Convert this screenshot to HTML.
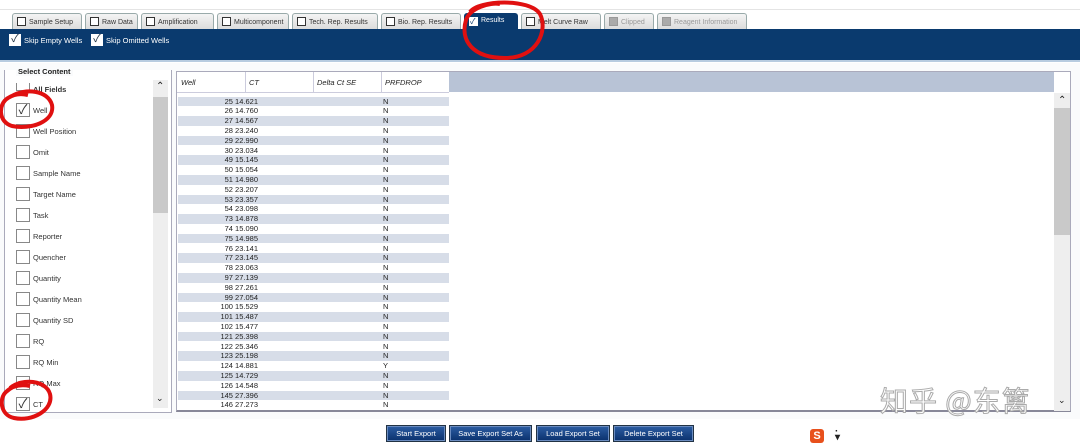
<!DOCTYPE html>
<html><head><meta charset="utf-8"><style>
*{box-sizing:border-box;margin:0;padding:0}
body{width:1080px;height:447px;background:#fff;position:relative;overflow:hidden;font-family:"Liberation Sans","Noto Sans CJK SC",sans-serif;font-size:8px;color:#222}
.a{position:absolute}
.tab{position:absolute;top:13px;height:16px;background:linear-gradient(#f4f4f4,#dcdcdc);border:1px solid #9aa;border-bottom:none;border-radius:3px 3px 0 0;font-size:7px;padding:3px 0 0 4px;white-space:nowrap;color:#333}
.tab i{display:inline-block;width:9px;height:9px;border:1px solid #333;background:#fff;vertical-align:-2px;margin-right:3px}
.tab.g i{background:#aaa;border-color:#999}
.tab.g{color:#999}
.cb{position:absolute;left:16px;width:14px;height:14px;border:1px solid #888;background:#fff}
.lbl{position:absolute;left:33px;font-size:7.5px;color:#333}
.row{position:absolute;left:178px;width:271px;height:9.8px;font-size:7.5px;line-height:9.8px}
.btn{position:absolute;top:426px;height:15px;background:linear-gradient(#2a5aa0,#0c3370);border:1px solid #6a8bbf;outline:1px solid #234;color:#fff;font-size:7.5px;line-height:13px;text-align:center}
</style></head><body>
<div class="a" style="left:0;top:0;width:1080px;height:10px;border-bottom:1px solid #e4e4e4"></div>
<div class="tab" style="left:12px;width:70px"><i></i>Sample Setup</div>
<div class="tab" style="left:85px;width:53px"><i></i>Raw Data</div>
<div class="tab" style="left:141px;width:73px"><i></i>Amplification</div>
<div class="tab" style="left:217px;width:72px"><i></i>Multicomponent</div>
<div class="tab" style="left:292px;width:86px"><i></i>Tech. Rep. Results</div>
<div class="tab" style="left:381px;width:80px"><i></i>Bio. Rep. Results</div>
<div class="tab" style="left:464px;width:54px;background:#0a3a6e;color:#fff;border-color:#0a3a6e"><i style="background:#fff;border-color:#fff;color:#0a3a6e;font-style:normal;font-size:8px;line-height:7px">✓</i>Results</div>
<div class="tab" style="left:521px;width:80px"><i></i>Melt Curve Raw</div>
<div class="tab g" style="left:604px;width:50px"><i></i>Clipped</div>
<div class="tab g" style="left:657px;width:90px"><i></i>Reagent Information</div>
<div class="a" style="left:0;top:29px;width:1080px;height:33px;background:#0a3a6e;border-bottom:2px solid #b8cce0"></div>
<div class="a" style="left:9px;top:34px;width:12px;height:12px;background:#fff;color:#234;font-size:11px;line-height:11px;text-align:center">✓</div>
<div class="a" style="left:24px;top:36px;color:#fff;font-size:7.5px">Skip Empty Wells</div>
<div class="a" style="left:91px;top:34px;width:12px;height:12px;background:#fff;color:#234;font-size:11px;line-height:11px;text-align:center">✓</div>
<div class="a" style="left:106px;top:36px;color:#fff;font-size:7.5px">Skip Omitted Wells</div>
<div class="a" style="left:0;top:63px;width:1080px;height:356px;background:#fafbfc"></div>
<div class="a" style="left:4px;top:70px;width:168px;height:343px;border:1px solid #aab;border-top:none;background:#fff"></div>
<div class="a" style="left:16px;top:67px;font-size:7.5px;font-weight:bold;background:#fafbfc;padding:0 2px">Select Content</div>
<div class="a" style="left:153px;top:80px;width:15px;height:328px;background:#eee"></div>
<div class="a" style="left:153px;top:97px;width:15px;height:116px;background:#c9c9c9"></div>
<div class="a" style="left:156px;top:81px;font-size:10px">⌃</div>
<div class="a" style="left:156px;top:393px;font-size:9px">⌄</div>
<div class="cb" style="top:83px;height:8px;border-top:none"></div>
<div class="lbl" style="top:85px;font-weight:bold">All Fields</div>
<div class="cb" style="top:103px;font-size:13px;line-height:12px;text-align:center;color:#333">✓</div><div class="lbl" style="top:106px">Well</div>
<div class="cb" style="top:124px"></div><div class="lbl" style="top:127px">Well Position</div>
<div class="cb" style="top:145px"></div><div class="lbl" style="top:148px">Omit</div>
<div class="cb" style="top:166px"></div><div class="lbl" style="top:169px">Sample Name</div>
<div class="cb" style="top:187px"></div><div class="lbl" style="top:190px">Target Name</div>
<div class="cb" style="top:208px"></div><div class="lbl" style="top:211px">Task</div>
<div class="cb" style="top:229px"></div><div class="lbl" style="top:232px">Reporter</div>
<div class="cb" style="top:250px"></div><div class="lbl" style="top:253px">Quencher</div>
<div class="cb" style="top:271px"></div><div class="lbl" style="top:274px">Quantity</div>
<div class="cb" style="top:292px"></div><div class="lbl" style="top:295px">Quantity Mean</div>
<div class="cb" style="top:313px"></div><div class="lbl" style="top:316px">Quantity SD</div>
<div class="cb" style="top:334px"></div><div class="lbl" style="top:337px">RQ</div>
<div class="cb" style="top:355px"></div><div class="lbl" style="top:358px">RQ Min</div>
<div class="cb" style="top:376px"></div><div class="lbl" style="top:379px">RQ Max</div>
<div class="cb" style="top:397px;font-size:13px;line-height:12px;text-align:center;color:#333">✓</div><div class="lbl" style="top:400px">CT</div>
<div class="a" style="left:176px;top:71px;width:895px;height:341px;border:1px solid #aab;border-bottom:2px solid #889;background:#fff"></div>
<div class="a" style="left:177px;top:72px;width:877px;height:20px;background:#b8c3d6"></div>
<div class="a" style="left:177px;top:72px;width:272px;height:21px;background:#fff;border-bottom:1px solid #ccd;font-style:italic;font-size:7.5px">
<span class="a" style="left:4px;top:6px">Well</span><span class="a" style="left:68px;top:0;height:21px;border-left:1px solid #ccd"></span>
<span class="a" style="left:72px;top:6px">CT</span><span class="a" style="left:136px;top:0;height:21px;border-left:1px solid #ccd"></span>
<span class="a" style="left:140px;top:6px">Delta Ct SE</span><span class="a" style="left:204px;top:0;height:21px;border-left:1px solid #ccd"></span>
<span class="a" style="left:208px;top:6px">PRFDROP</span></div>
<div class="a" style="left:1054px;top:93px;width:16px;height:318px;background:#eee"></div>
<div class="a" style="left:1054px;top:108px;width:16px;height:127px;background:#c9c9c9"></div>
<div class="a" style="left:1058px;top:95px;font-size:10px">⌃</div>
<div class="a" style="left:0;top:96.5px;width:0;height:0">
<div style="position:relative">
<div class="row" style="top:0;background:#d7dde8"><span class="a" style="width:80px;text-align:right">25 14.621</span><span class="a" style="left:205px">N</span></div>
<div class="row" style="top:9.8px;background:#fff"><span class="a" style="width:80px;text-align:right">26 14.760</span><span class="a" style="left:205px">N</span></div>
<div class="row" style="top:19.6px;background:#d7dde8"><span class="a" style="width:80px;text-align:right">27 14.567</span><span class="a" style="left:205px">N</span></div>
<div class="row" style="top:29.4px;background:#fff"><span class="a" style="width:80px;text-align:right">28 23.240</span><span class="a" style="left:205px">N</span></div>
<div class="row" style="top:39.2px;background:#d7dde8"><span class="a" style="width:80px;text-align:right">29 22.990</span><span class="a" style="left:205px">N</span></div>
<div class="row" style="top:49px;background:#fff"><span class="a" style="width:80px;text-align:right">30 23.034</span><span class="a" style="left:205px">N</span></div>
<div class="row" style="top:58.8px;background:#d7dde8"><span class="a" style="width:80px;text-align:right">49 15.145</span><span class="a" style="left:205px">N</span></div>
<div class="row" style="top:68.6px;background:#fff"><span class="a" style="width:80px;text-align:right">50 15.054</span><span class="a" style="left:205px">N</span></div>
<div class="row" style="top:78.4px;background:#d7dde8"><span class="a" style="width:80px;text-align:right">51 14.980</span><span class="a" style="left:205px">N</span></div>
<div class="row" style="top:88.2px;background:#fff"><span class="a" style="width:80px;text-align:right">52 23.207</span><span class="a" style="left:205px">N</span></div>
<div class="row" style="top:98px;background:#d7dde8"><span class="a" style="width:80px;text-align:right">53 23.357</span><span class="a" style="left:205px">N</span></div>
<div class="row" style="top:107.8px;background:#fff"><span class="a" style="width:80px;text-align:right">54 23.098</span><span class="a" style="left:205px">N</span></div>
<div class="row" style="top:117.6px;background:#d7dde8"><span class="a" style="width:80px;text-align:right">73 14.878</span><span class="a" style="left:205px">N</span></div>
<div class="row" style="top:127.4px;background:#fff"><span class="a" style="width:80px;text-align:right">74 15.090</span><span class="a" style="left:205px">N</span></div>
<div class="row" style="top:137.2px;background:#d7dde8"><span class="a" style="width:80px;text-align:right">75 14.985</span><span class="a" style="left:205px">N</span></div>
<div class="row" style="top:147px;background:#fff"><span class="a" style="width:80px;text-align:right">76 23.141</span><span class="a" style="left:205px">N</span></div>
<div class="row" style="top:156.8px;background:#d7dde8"><span class="a" style="width:80px;text-align:right">77 23.145</span><span class="a" style="left:205px">N</span></div>
<div class="row" style="top:166.6px;background:#fff"><span class="a" style="width:80px;text-align:right">78 23.063</span><span class="a" style="left:205px">N</span></div>
<div class="row" style="top:176.4px;background:#d7dde8"><span class="a" style="width:80px;text-align:right">97 27.139</span><span class="a" style="left:205px">N</span></div>
<div class="row" style="top:186.2px;background:#fff"><span class="a" style="width:80px;text-align:right">98 27.261</span><span class="a" style="left:205px">N</span></div>
<div class="row" style="top:196px;background:#d7dde8"><span class="a" style="width:80px;text-align:right">99 27.054</span><span class="a" style="left:205px">N</span></div>
<div class="row" style="top:205.8px;background:#fff"><span class="a" style="width:80px;text-align:right">100 15.529</span><span class="a" style="left:205px">N</span></div>
<div class="row" style="top:215.6px;background:#d7dde8"><span class="a" style="width:80px;text-align:right">101 15.487</span><span class="a" style="left:205px">N</span></div>
<div class="row" style="top:225.4px;background:#fff"><span class="a" style="width:80px;text-align:right">102 15.477</span><span class="a" style="left:205px">N</span></div>
<div class="row" style="top:235.2px;background:#d7dde8"><span class="a" style="width:80px;text-align:right">121 25.398</span><span class="a" style="left:205px">N</span></div>
<div class="row" style="top:245px;background:#fff"><span class="a" style="width:80px;text-align:right">122 25.346</span><span class="a" style="left:205px">N</span></div>
<div class="row" style="top:254.8px;background:#d7dde8"><span class="a" style="width:80px;text-align:right">123 25.198</span><span class="a" style="left:205px">N</span></div>
<div class="row" style="top:264.6px;background:#fff"><span class="a" style="width:80px;text-align:right">124 14.881</span><span class="a" style="left:205px">Y</span></div>
<div class="row" style="top:274.4px;background:#d7dde8"><span class="a" style="width:80px;text-align:right">125 14.729</span><span class="a" style="left:205px">N</span></div>
<div class="row" style="top:284.2px;background:#fff"><span class="a" style="width:80px;text-align:right">126 14.548</span><span class="a" style="left:205px">N</span></div>
<div class="row" style="top:294px;background:#d7dde8"><span class="a" style="width:80px;text-align:right">145 27.396</span><span class="a" style="left:205px">N</span></div>
<div class="row" style="top:303.8px;background:#fff"><span class="a" style="width:80px;text-align:right">146 27.273</span><span class="a" style="left:205px">N</span></div>
</div></div>
<div class="a" style="left:880px;top:380px;font-size:28px;color:#fff;-webkit-text-stroke:1px #aaa;letter-spacing:1px;font-family:'Noto Sans CJK SC',sans-serif">知乎 @东篱</div>
<div class="a" style="left:1058px;top:395px;font-size:9px">⌄</div>
<div class="btn" style="left:387px;width:58px">Start Export</div>
<div class="btn" style="left:450px;width:81px">Save Export Set As</div>
<div class="btn" style="left:537px;width:72px">Load Export Set</div>
<div class="btn" style="left:614px;width:79px">Delete Export Set</div>
<div class="a" style="left:810px;top:429px;width:14px;height:14px;background:#e8501c;border-radius:3px;color:#fff;font-weight:bold;font-size:11px;line-height:14px;text-align:center">S</div>
<div class="a" style="left:835px;top:429px;font-size:10px;line-height:6px;font-weight:bold">·<br>▾</div>
<svg class="a" style="left:0;top:0" width="1080" height="447">
<path d="M470 12 C478 0 530 -2 540 14 C548 30 538 58 505 58 C472 58 460 40 466 20 C470 8 490 2 500 4" fill="none" stroke="#e01010" stroke-width="4"/>
<path d="M12 96 C25 88 48 90 52 105 C55 122 30 130 12 126 C-2 122 -2 104 8 98 C14 94 20 93 28 95" fill="none" stroke="#e01010" stroke-width="4"/>
<path d="M10 388 C22 378 46 380 50 394 C54 410 32 422 14 418 C0 415 -1 398 6 392 C12 386 20 384 30 386" fill="none" stroke="#e01010" stroke-width="4"/>
</svg>
</body></html>
